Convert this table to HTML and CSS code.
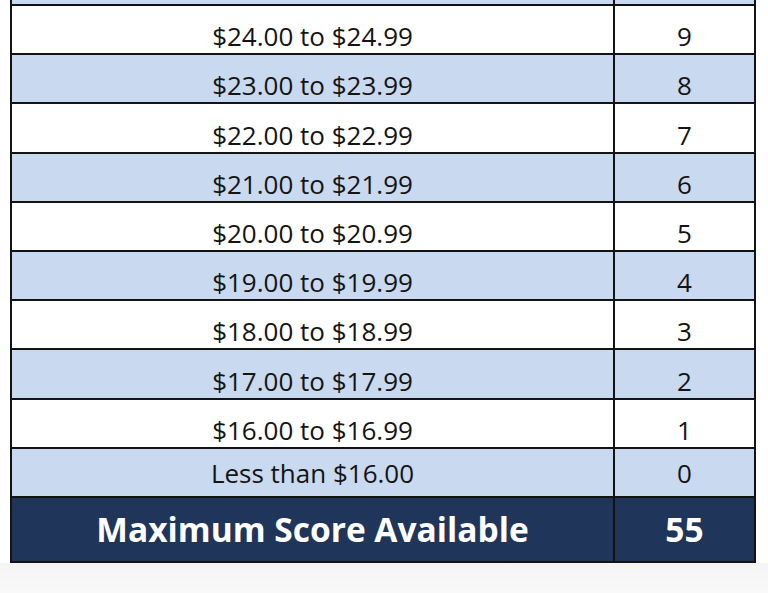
FILE: index.html
```html
<!DOCTYPE html>
<html>
<head>
<meta charset="utf-8">
<link rel="stylesheet" href="styles.css">
</head>
<body>
<div class="page">
  <table class="score">
    <tr class="strip alt"><td class="range"></td><td class="pts"></td></tr>
    <tr><td class="range">$24.00 to $24.99</td><td class="pts">9</td></tr>
    <tr class="alt"><td class="range">$23.00 to $23.99</td><td class="pts">8</td></tr>
    <tr><td class="range">$22.00 to $22.99</td><td class="pts">7</td></tr>
    <tr class="alt"><td class="range">$21.00 to $21.99</td><td class="pts">6</td></tr>
    <tr><td class="range">$20.00 to $20.99</td><td class="pts">5</td></tr>
    <tr class="alt"><td class="range">$19.00 to $19.99</td><td class="pts">4</td></tr>
    <tr><td class="range">$18.00 to $18.99</td><td class="pts">3</td></tr>
    <tr class="alt"><td class="range">$17.00 to $17.99</td><td class="pts">2</td></tr>
    <tr><td class="range">$16.00 to $16.99</td><td class="pts">1</td></tr>
    <tr class="alt last"><td class="range">Less than $16.00</td><td class="pts">0</td></tr>
    <tr class="total"><td class="range">Maximum Score Available</td><td class="pts">55</td></tr>
  </table>
</div>
<div class="below"></div>
</body>
</html>
```
FILE: styles.css
```css
html, body {
  margin: 0;
  padding: 0;
  background: #ffffff;
}
body {
  font-family: "Open Sans", "Noto Sans", sans-serif;
  height: 593px;
  overflow: hidden;
  display: flex;
  flex-direction: column;
}
.page {
  background: #ffffff;
  padding: 0 12px 0 10px;
}
.score {
  border-collapse: collapse;
  width: 746px;
  color: #141414;
  font-size: 26px;
}
.score td {
  border: 2px solid #131313;
  text-align: center;
  height: 45.2px;
  padding: 0 0 2px 0;
  line-height: 30px;
  vertical-align: bottom;
}
.score td.pts {
  width: 139px;
}
.score tr.strip td {
  height: 4px;
  padding: 0;
  border-top: none;
  line-height: 0;
}
.score tr.alt td {
  background: #c9d9ef;
}
.score tr.last td {
  padding-bottom: 8px;
  height: 39.2px;
}
.score tr.total td {
  background: #1f365a;
  color: #ffffff;
  font-weight: 700;
  font-size: 33.5px;
  height: 63px;
  padding: 0;
  line-height: 40px;
  vertical-align: middle;
}
.below {
  flex: 1;
  background: linear-gradient(#f4f4f4, #f9f9f9);
}
```
